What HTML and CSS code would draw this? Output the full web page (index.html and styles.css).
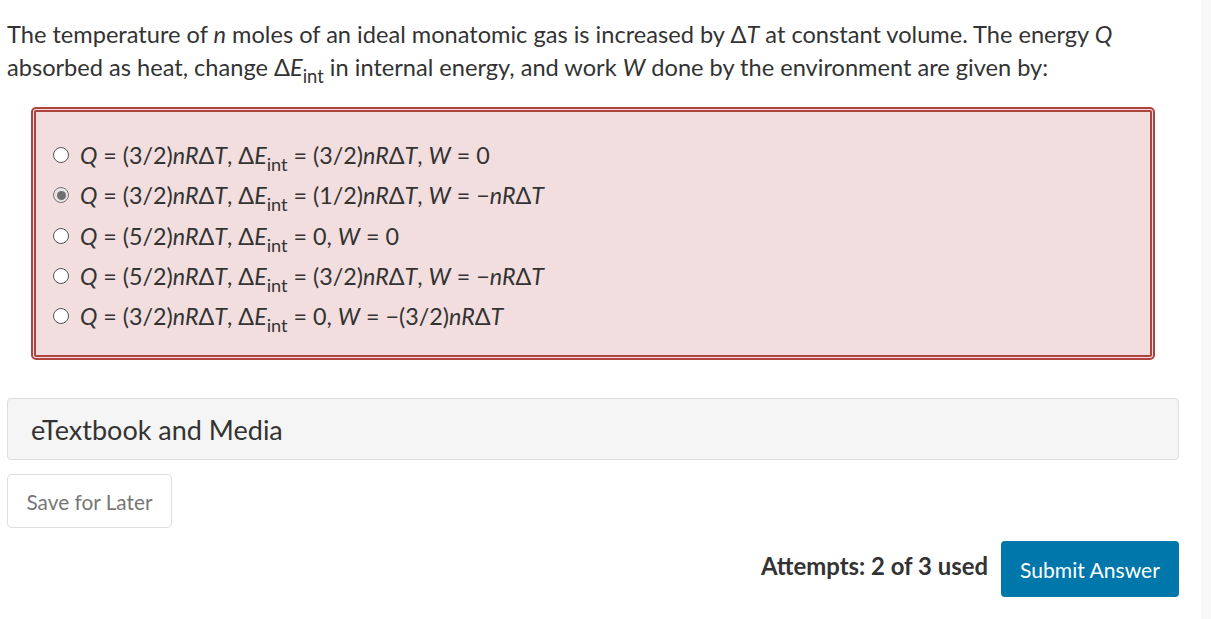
FILE: index.html
```html
<!DOCTYPE html>
<html>
<head>
<meta charset="utf-8">
<link rel="stylesheet" href="styles.css">
</head>
<body>
<div class="page">
  <main class="main">
    <p class="question">The temperature of <i>n</i> moles of an ideal monatomic gas is increased by Δ<i>T</i> at constant volume. The energy <i>Q</i> absorbed as heat, change Δ<i>E</i><sub>int</sub> in internal energy, and work <i>W</i> done by the environment are given by:</p>

    <div class="answers">
      <label class="option"><span class="radio"></span><span class="opt-text"><i>Q</i> = (3/2)<i>nR</i>Δ<i>T</i>, Δ<i>E</i><sub>int</sub> = (3/2)<i>nR</i>Δ<i>T</i>, <i>W</i> = 0</span></label>
      <label class="option"><span class="radio checked"></span><span class="opt-text"><i>Q</i> = (3/2)<i>nR</i>Δ<i>T</i>, Δ<i>E</i><sub>int</sub> = (1/2)<i>nR</i>Δ<i>T</i>, <i>W</i> = −<i>nR</i>Δ<i>T</i></span></label>
      <label class="option"><span class="radio"></span><span class="opt-text"><i>Q</i> = (5/2)<i>nR</i>Δ<i>T</i>, Δ<i>E</i><sub>int</sub> = 0, <i>W</i> = 0</span></label>
      <label class="option"><span class="radio"></span><span class="opt-text"><i>Q</i> = (5/2)<i>nR</i>Δ<i>T</i>, Δ<i>E</i><sub>int</sub> = (3/2)<i>nR</i>Δ<i>T</i>, <i>W</i> = −<i>nR</i>Δ<i>T</i></span></label>
      <label class="option"><span class="radio"></span><span class="opt-text"><i>Q</i> = (3/2)<i>nR</i>Δ<i>T</i>, Δ<i>E</i><sub>int</sub> = 0, <i>W</i> = −(3/2)<i>nR</i>Δ<i>T</i></span></label>
    </div>

    <div class="media-panel">eTextbook and Media</div>

    <button class="btn-save">Save for Later</button>

    <div class="submit-row">
      <span class="attempts">Attempts: 2 of 3 used</span>
      <button class="btn-submit">Submit Answer</button>
    </div>
  </main>
  <aside class="strip"></aside>
</div>
</body>
</html>
```

FILE: styles.css
```css
html, body {
  margin: 0;
  padding: 0;
  background: #ffffff;
}
body {
  font-family: Lato, "Open Sans", sans-serif;
  color: #333333;
}
.page {
  display: flex;
  min-height: 619px;
}
.main {
  width: 1172px;
  padding: 18px 22px 0 7px;
}
.strip {
  flex: 1;
  background: #f8f8f8;
}
.question {
  margin: 0;
  font-size: 23.6px;
  line-height: 33px;
}
sub {
  font-size: 0.78em;
  vertical-align: -0.36em;
  line-height: 0;
}
.answers {
  margin: 23px 24px 0 24px;
  border: 5px double #b0423f;
  border-radius: 5px;
  background: #f2dede;
  padding: 23px 20px 19px 17px;
}
.option {
  display: flex;
  align-items: center;
  height: 40.25px;
  font-size: 23.3px;
}
.radio {
  width: 14px;
  height: 14px;
  border: 1.5px solid #555;
  border-radius: 50%;
  background: #fff;
  margin-right: 11px;
  display: flex;
  align-items: center;
  justify-content: center;
  flex: none;
}
.radio.checked {
  border-color: #777;
  background: #e6e6e6;
}
.radio.checked::after {
  content: "";
  width: 9px;
  height: 9px;
  border-radius: 50%;
  background: #707070;
}
.media-panel {
  margin-top: 38px;
  height: 60px;
  border: 1px solid #dddddd;
  border-radius: 4px;
  background: #f5f5f5;
  padding-left: 23px;
  display: flex;
  align-items: center;
  font-size: 27px;
  color: #333;
}
.btn-save {
  display: block;
  margin-top: 14px;
  width: 165px;
  height: 54px;
  border: 1px solid #dddddd;
  border-radius: 5px;
  background: #fff;
  font-family: inherit;
  font-size: 20.8px;
  color: #777;
  padding: 0;
}
.submit-row {
  display: flex;
  justify-content: flex-end;
  align-items: center;
  gap: 13px;
  margin-top: 13px;
}
.attempts {
  font-size: 23.9px;
  font-weight: bold;
  color: #333;
  margin-top: -7px;
}
.btn-submit {
  width: 178px;
  height: 56px;
  border: none;
  border-radius: 4px;
  background: #0077aa;
  color: #fff;
  font-family: inherit;
  font-size: 21.1px;
  padding: 0;
}
```
